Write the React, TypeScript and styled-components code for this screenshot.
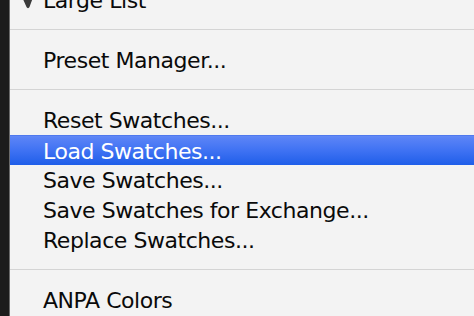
import React from "react";
import styled, { createGlobalStyle } from "styled-components";

const Global = createGlobalStyle`
  html, body { margin: 0; padding: 0; overflow: hidden; background: #f3f3f3; }
  body { width: 474px; height: 316px; }
`;

const Screen = styled.div`
  display: flex;
  width: 474px;
  height: 316px;
  overflow: hidden;
`;

const SideStrip = styled.div`
  width: 9px;
  flex: none;
  background: #1c1c1c;
  border-right: 1px solid #6a6a6a;
`;

const Menu = styled.div`
  flex: 1;
  display: flex;
  flex-direction: column;
  margin-top: -15px;
  background: #f3f3f3;
  font-family: "DejaVu Sans", "Liberation Sans", sans-serif;
  font-size: 22px;
  letter-spacing: -0.45px;
  color: #0a0a0a;
`;

const Item = styled.div<{ $active?: boolean }>`
  height: 30px;
  flex: none;
  display: grid;
  grid-template-columns: 33px 1fr;
  align-items: center;
  box-sizing: border-box;
  color: ${(p) => (p.$active ? "#fff" : "#0a0a0a")};
  background: ${(p) =>
    p.$active
      ? "linear-gradient(#6389f6 0px, #5a83f6 2px, #3f72f3 50%, #1f5ee9 100%)"
      : "transparent"};
  border-top: ${(p) => (p.$active ? "1px solid #4f79ee" : "none")};
`;

const Mark = styled.div`
  display: flex;
  justify-content: flex-end;
  padding-right: 8px;
  align-self: stretch;
  align-items: center;
`;

const Label = styled.span`
  white-space: nowrap;
  line-height: 30px;
  padding-top: 1px;
`;

const Separator = styled.div`
  height: 30px;
  flex: none;
  display: flex;
  flex-direction: column;
  padding-top: 14px;
  box-sizing: border-box;
  &::before {
    content: "";
    display: block;
    height: 1px;
    background: #d4d4d4;
  }
`;

const CheckIcon = () => (
  <svg width="14" height="18" viewBox="0 0 14 18">
    <path
      d="M1 4 C1 2 4 1.5 5 3 L6.5 6 L11 0 L14 0 L8.5 15 C8 16.5 6 16.5 5.5 15 L1.5 6 Z"
      fill="#3a3a3a"
    />
  </svg>
);

type Entry = { label?: string; sep?: boolean; active?: boolean; checked?: boolean };

const entries: Entry[] = [
  { label: "Large List", checked: true },
  { sep: true },
  { label: "Preset Manager..." },
  { sep: true },
  { label: "Reset Swatches..." },
  { label: "Load Swatches...", active: true },
  { label: "Save Swatches..." },
  { label: "Save Swatches for Exchange..." },
  { label: "Replace Swatches..." },
  { sep: true },
  { label: "ANPA Colors" },
];

export default function App() {
  return (
    <>
      <Global />
      <Screen>
        <SideStrip />
        <Menu>
          {entries.map((e, i) =>
            e.sep ? (
              <Separator key={i} />
            ) : (
              <Item key={i} $active={e.active}>
                <Mark>{e.checked ? <CheckIcon /> : null}</Mark>
                <Label>{e.label}</Label>
              </Item>
            )
          )}
        </Menu>
      </Screen>
    </>
  );
}
